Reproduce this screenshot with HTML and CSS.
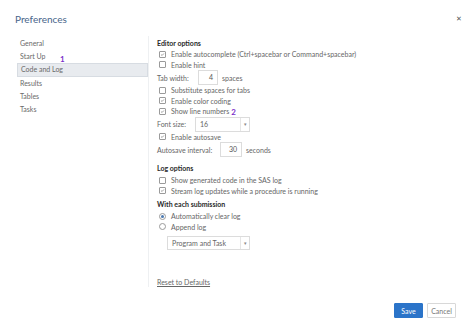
FILE: index.html
```html
<!DOCTYPE html>
<html>
<head>
<meta charset="utf-8">
<link rel="stylesheet" href="styles.css">
</head>
<body>
<div class="dialog">
  <div class="header">
    <div class="title">Preferences</div>
    <div class="close">&#x2715;</div>
  </div>
  <div class="main">
    <div class="nav">
      <div class="nav-item">General</div>
      <div class="nav-item">Start Up<span class="marker m1">1</span></div>
      <div class="nav-item selected">Code and Log</div>
      <div class="nav-item">Results</div>
      <div class="nav-item">Tables</div>
      <div class="nav-item">Tasks</div>
    </div>
    <div class="content">
      <div class="heading h-first">Editor options</div>
      <div class="cb-row"><span class="cb checked"><svg viewBox="0 0 8 8"><path d="M1.8 4.2 L3.3 5.6 L6.2 2.4"/></svg></span>Enable autocomplete (Ctrl+spacebar or Command+spacebar)</div>
      <div class="cb-row"><span class="cb"></span>Enable hint</div>
      <div class="field-row tab-row"><span class="flabel">Tab width:</span><span class="num-input w-tab">4</span><span class="unit">spaces</span></div>
      <div class="cb-row"><span class="cb"></span>Substitute spaces for tabs</div>
      <div class="cb-row"><span class="cb checked"><svg viewBox="0 0 8 8"><path d="M1.8 4.2 L3.3 5.6 L6.2 2.4"/></svg></span>Enable color coding</div>
      <div class="cb-row"><span class="cb checked"><svg viewBox="0 0 8 8"><path d="M1.8 4.2 L3.3 5.6 L6.2 2.4"/></svg></span>Show line numbers<span class="marker m2">2</span></div>
      <div class="field-row font-row"><span class="flabel fs-label">Font size:</span><span class="select sel-font"><span class="sel-val">16</span><span class="sel-arrow">&#9662;</span></span></div>
      <div class="cb-row"><span class="cb checked"><svg viewBox="0 0 8 8"><path d="M1.8 4.2 L3.3 5.6 L6.2 2.4"/></svg></span>Enable autosave</div>
      <div class="field-row"><span class="flabel ai-label">Autosave interval:</span><span class="num-input w-ai">30</span><span class="unit">seconds</span></div>

      <div class="heading h-log">Log options</div>
      <div class="cb-row"><span class="cb"></span>Show generated code in the SAS log</div>
      <div class="cb-row"><span class="cb checked"><svg viewBox="0 0 8 8"><path d="M1.8 4.2 L3.3 5.6 L6.2 2.4"/></svg></span>Stream log updates while a procedure is running</div>

      <div class="heading h-sub">With each submission</div>
      <div class="cb-row"><span class="radio on"></span>Automatically clear log</div>
      <div class="cb-row"><span class="radio"></span>Append log</div>
      <div class="select sel-append"><span class="sel-val">Program and Task</span><span class="sel-arrow">&#9662;</span></div>

      <div class="reset">Reset to Defaults</div>
    </div>
  </div>
  <div class="footer">
    <button class="btn primary">Save</button>
    <button class="btn">Cancel</button>
  </div>
</div>
</body>
</html>
```

FILE: styles.css
```css
* { box-sizing: border-box; }
html, body {
  margin: 0;
  padding: 0;
  background: #fff;
}
body {
  width: 474px;
  height: 329px;
  overflow: hidden;
  font-family: Lato, "Open Sans", sans-serif;
  font-size: 7px;
  color: #666;
}
.dialog {
  width: 474px;
  height: 329px;
  display: flex;
  flex-direction: column;
}
.header {
  height: 36px;
  flex: none;
  display: flex;
  align-items: center;
  justify-content: space-between;
  padding: 0 12px 0 15px;
}
.title {
  font-size: 10px;
  color: #48658a;
  margin-top: 2px;
}
.close {
  font-size: 7px;
  color: #555;
}
.main {
  display: flex;
  height: 251px;
  flex: none;
}
.nav {
  width: 132px;
  margin-left: 17px;
  padding-top: 0.5px;
  border-right: 1px solid #eef0f2;
}
.nav-item {
  height: 13.4px;
  line-height: 13.4px;
  padding-left: 3px;
  color: #6a6a6a;
  position: relative;
}
.nav-item.selected {
  background: #e8ebef;
  border: 1px solid #d7dce2;
  line-height: 11.4px;
}
.marker {
  position: absolute;
  color: #7a2fc9;
  font-weight: bold;
  font-size: 8px;
}
.m1 { left: 43px; top: 3px; }
.m2 { position: relative; margin-left: 2px; top: 1px; }
.content {
  padding-left: 8px;
  flex: 1;
  display: flex;
  flex-direction: column;
  align-items: flex-start;
}
.heading {
  font-weight: bold;
  color: #2a2a2a;
  height: 10px;
  line-height: 10px;
}
.h-first { margin-top: 2px; margin-bottom: 1px; }
.h-log { margin-top: 6px; margin-bottom: 2px; }
.h-sub { margin-top: 3px; margin-bottom: 2px; }
.cb-row {
  height: 10.5px;
  line-height: 10.5px;
  display: flex;
  align-items: center;
  color: #666;
  white-space: nowrap;
}
.cb {
  width: 7px;
  height: 7px;
  border: 1px solid #9a9a9a;
  border-radius: 1px;
  margin-left: 2px;
  margin-right: 5px;
  flex: none;
  display: flex;
}
.cb svg {
  width: 100%;
  height: 100%;
}
.cb svg path {
  fill: none;
  stroke: #666;
  stroke-width: 1;
}
.radio {
  width: 7px;
  height: 7px;
  border: 1px solid #9a9a9a;
  border-radius: 50%;
  margin-left: 2px;
  margin-right: 5px;
  flex: none;
  position: relative;
}
.radio.on::after {
  content: "";
  position: absolute;
  left: 1px;
  top: 1px;
  width: 3px;
  height: 3px;
  border-radius: 50%;
  background: #4a78b0;
}
.field-row {
  height: 15px;
  display: flex;
  align-items: center;
}
.flabel { color: #666; }
.tab-row .flabel { width: 41px; }
.fs-label { width: 38px; }
.ai-label { width: 63px; }
.num-input {
  height: 15px;
  border: 1px solid #dcdcdc;
  text-align: right;
  padding-right: 4px;
  line-height: 13px;
  color: #555;
}
.w-tab { width: 20px; }
.w-ai { width: 22px; }
.unit { margin-left: 4px; }
.select {
  height: 15px;
  border: 1px solid #dcdcdc;
  display: flex;
  align-items: center;
  color: #666;
}
.sel-val {
  flex: 1;
  padding-left: 4px;
}
.sel-arrow {
  width: 9px;
  height: 100%;
  border-left: 1px solid #e6e6e6;
  font-size: 5px;
  display: flex;
  align-items: center;
  justify-content: center;
  color: #888;
}
.sel-font { width: 55px; }
.sel-append { width: 83px; margin-left: 10px; margin-top: 4px; }
.reset {
  margin-top: 27px;
  text-decoration: underline;
  color: #666;
  height: 10px;
  line-height: 10px;
}
.footer {
  display: flex;
  justify-content: flex-end;
  gap: 4px;
  padding: 16px 18px 0 0;
}
.btn {
  font-family: Lato, "Open Sans", sans-serif;
  font-size: 7px;
  height: 15px;
  width: 29px;
  padding: 0;
  border: 1px solid #d8d8d8;
  background: #fff;
  color: #777;
  border-radius: 1px;
}
.btn.primary {
  background: #2b74c9;
  border-color: #2b74c9;
  color: #fff;
}
```
